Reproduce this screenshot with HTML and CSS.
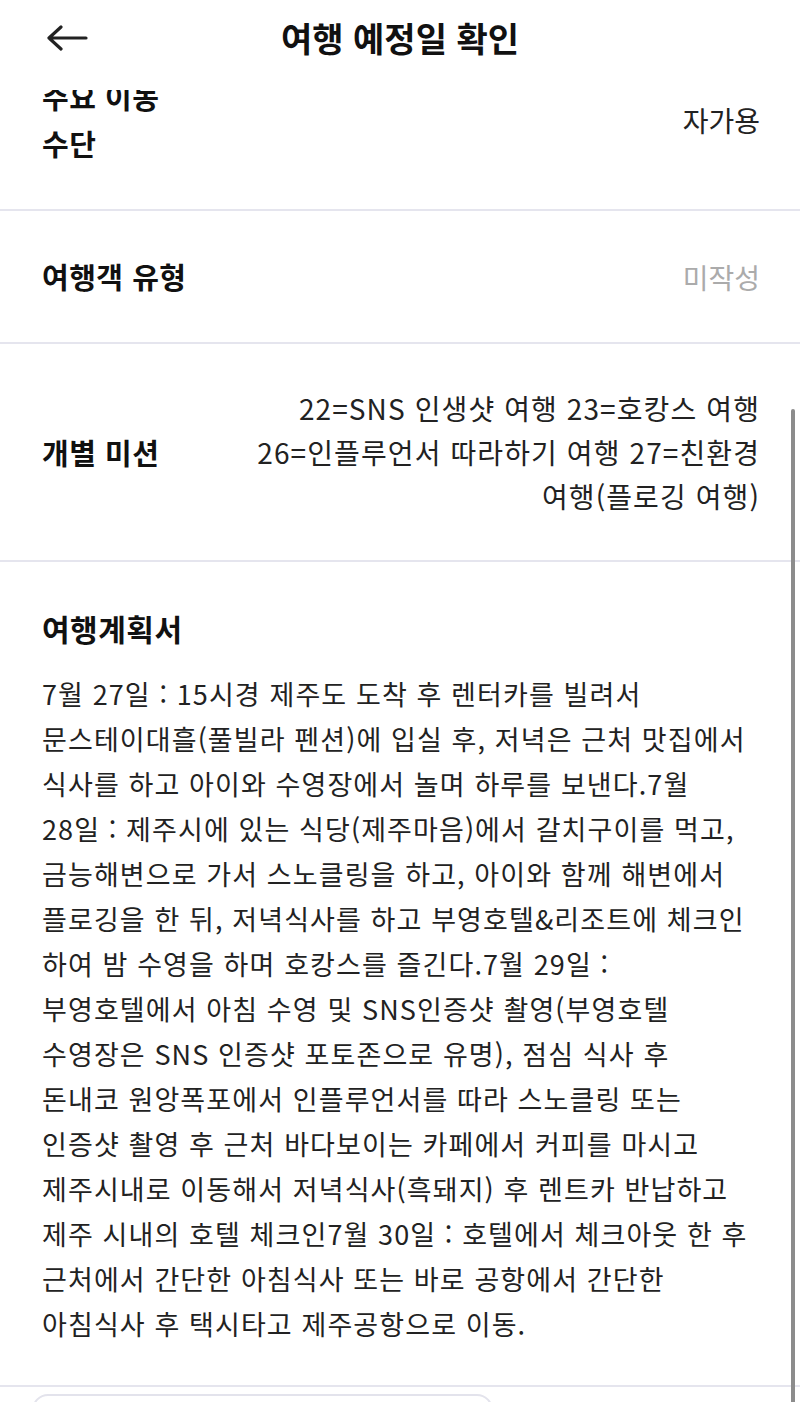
FILE: index.html
```html
<!DOCTYPE html>
<html lang="ko">
<head>
<meta charset="utf-8">
<title>여행 예정일 확인</title>
<link rel="stylesheet" href="styles.css">
</head>
<body>
<div class="app">
  <header class="header">
    <div class="header-bar">
      <button class="back" aria-label="뒤로">
        <svg width="42" height="26" viewBox="0 0 42 26"><path d="M40 13H3M15 2L3 13L15 24" fill="none" stroke="#222" stroke-width="3.2" stroke-linecap="round" stroke-linejoin="round"/></svg>
      </button>
      <h1 class="title">여행 예정일 확인</h1>
      <span></span>
    </div>
  </header>

  <main class="content">
    <div class="row">
      <div class="label">주요 이동 수단</div>
      <div class="value">자가용</div>
    </div>
    <div class="row">
      <div class="label">여행객 유형</div>
      <div class="value empty">미작성</div>
    </div>
    <div class="row">
      <div class="label">개별 미션</div>
      <div class="value multi">22=SNS 인생샷 여행 23=호캉스 여행<br>26=인플루언서 따라하기 여행 27=친환경<br>여행(플로깅 여행)</div>
    </div>
    <section class="plan">
      <h2 class="plan-title">여행계획서</h2>
      <p class="plan-body">7월 27일 : 15시경 제주도 도착 후 렌터카를 빌려서<br>문스테이대흘(풀빌라 펜션)에 입실 후, 저녁은 근처 맛집에서<br>식사를 하고 아이와 수영장에서 놀며 하루를 보낸다.7월<br>28일 : 제주시에 있는 식당(제주마음)에서 갈치구이를 먹고,<br>금능해변으로 가서 스노클링을 하고, 아이와 함께 해변에서<br>플로깅을 한 뒤, 저녁식사를 하고 부영호텔&amp;리조트에 체크인<br>하여 밤 수영을 하며 호캉스를 즐긴다.7월 29일 :<br>부영호텔에서 아침 수영 및 SNS인증샷 촬영(부영호텔<br>수영장은 SNS 인증샷 포토존으로 유명), 점심 식사 후<br>돈내코 원앙폭포에서 인플루언서를 따라 스노클링 또는<br>인증샷 촬영 후 근처 바다보이는 카페에서 커피를 마시고<br>제주시내로 이동해서 저녁식사(흑돼지) 후 렌트카 반납하고<br>제주 시내의 호텔 체크인7월 30일 : 호텔에서 체크아웃 한 후<br>근처에서 간단한 아침식사 또는 바로 공항에서 간단한<br>아침식사 후 택시타고 제주공항으로 이동.</p>
    </section>
    <div class="footer-box"></div>
  </main>

  <div class="scrollbar"></div>
</div>
</body>
</html>
```

FILE: styles.css
```css
* { box-sizing: border-box; }

html, body {
  margin: 0;
  padding: 0;
  background: #fff;
}

body {
  font-family: "Noto Sans CJK KR", "Noto Sans", sans-serif;
  color: #1a1a1a;
}

.app {
  position: relative;
  width: 800px;
  height: 1402px;
  overflow: hidden;
  background: #fff;
}

.header {
  position: absolute;
  top: 0;
  left: 0;
  right: 0;
  height: 90px;
  background: #fff;
  z-index: 2;
}

.header-bar {
  height: 76px;
  display: grid;
  grid-template-columns: 1fr auto 1fr;
  align-items: center;
  padding: 0 46px;
}

.back {
  border: 0;
  background: none;
  padding: 0;
  width: 42px;
  height: 26px;
  display: flex;
  align-items: center;
}

.title {
  margin: 0;
  font-size: 34px;
  font-weight: 700;
  color: #111;
  line-height: 40px;
}

.content {
  padding-top: 31px;
}

.row {
  display: flex;
  justify-content: space-between;
  align-items: center;
  padding: 42px 40px 42px 42px;
  border-bottom: 2px solid #e5e5ee;
}

.label {
  flex: 0 0 165px;
  font-size: 29px;
  font-weight: 700;
  line-height: 47px;
  letter-spacing: 0.5px;
  word-break: keep-all;
  color: #111;
}

.value {
  font-size: 28px;
  line-height: 44px;
  color: #222;
  text-align: right;
}

.value.empty {
  color: #ababab;
}

.value.multi {
  white-space: nowrap;
  letter-spacing: 1.1px;
}

.plan {
  padding: 43px 40px 39px 42px;
  border-bottom: 2px solid #e5e5ee;
}

.plan-title {
  margin: 0 0 19px;
  font-size: 30px;
  font-weight: 700;
  line-height: 47px;
  letter-spacing: 0.5px;
  color: #111;
}

.plan-body {
  margin: 0;
  font-size: 27px;
  line-height: 45px;
  letter-spacing: 1.1px;
  color: #222;
  white-space: nowrap;
}

.footer-box {
  margin: 7px 307px 0 32px;
  height: 60px;
  border: 2px solid #e3e3ec;
  border-radius: 16px;
}

.scrollbar {
  position: absolute;
  top: 409px;
  right: 5px;
  width: 4px;
  height: 1010px;
  border-radius: 2px;
  background: #8c8c8c;
  z-index: 3;
}
```
